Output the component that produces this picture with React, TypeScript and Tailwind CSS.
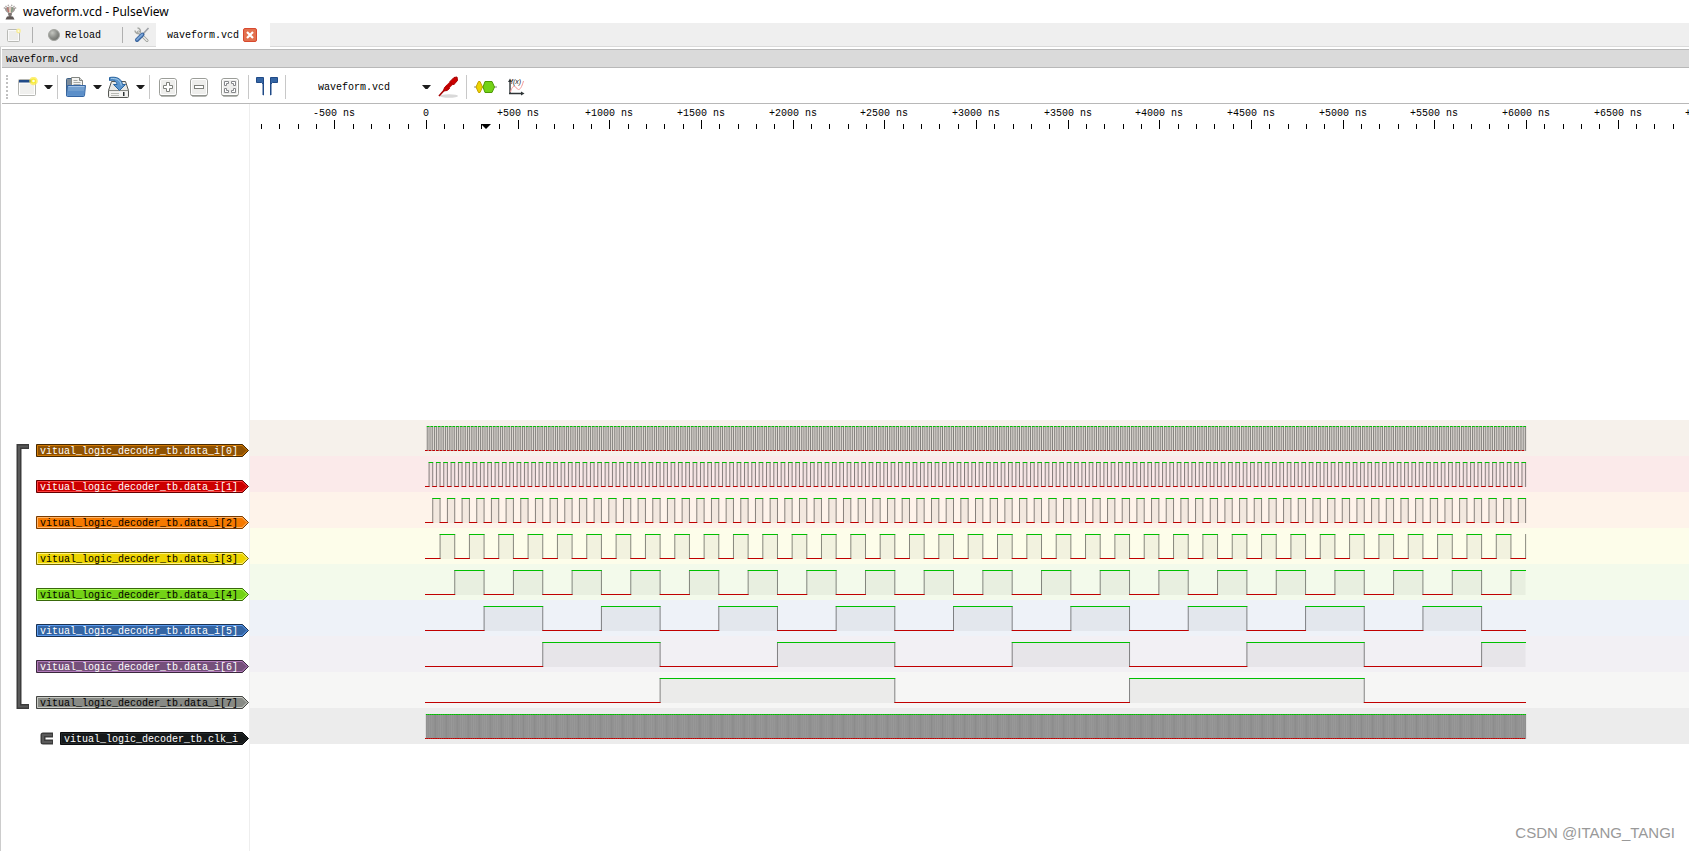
import { useState } from "react";

type Channel = {
  name: string;
  toggle: number; // ns between two edges
  fill: string;
  edge: string;
  light: string;
  text: string;
  row: string;
};

const END = 6000;
const PX_PER_NS = 0.18337;

const channels: Channel[] = [
  { name: "vitual_logic_decoder_tb.data_i[0]", toggle: 10, fill: "#8f5202", edge: "#472901", light: "#d27a06", text: "text-white", row: "bg-[#f6f1eb]" },
  { name: "vitual_logic_decoder_tb.data_i[1]", toggle: 20, fill: "#cc0000", edge: "#660000", light: "#ff4040", text: "text-white", row: "bg-[#fbeaea]" },
  { name: "vitual_logic_decoder_tb.data_i[2]", toggle: 40, fill: "#f57900", edge: "#7a3c00", light: "#ffb469", text: "text-black", row: "bg-[#fef3ea]" },
  { name: "vitual_logic_decoder_tb.data_i[3]", toggle: 80, fill: "#edd400", edge: "#766a00", light: "#fff27a", text: "text-black", row: "bg-[#fdfdea]" },
  { name: "vitual_logic_decoder_tb.data_i[4]", toggle: 160, fill: "#73d216", edge: "#39690b", light: "#b0ff62", text: "text-black", row: "bg-[#f3faeb]" },
  { name: "vitual_logic_decoder_tb.data_i[5]", toggle: 320, fill: "#3465a4", edge: "#1a3252", light: "#5b9bf0", text: "text-white", row: "bg-[#eef2f8]" },
  { name: "vitual_logic_decoder_tb.data_i[6]", toggle: 640, fill: "#75507b", edge: "#3a283d", light: "#b27abb", text: "text-white", row: "bg-[#f2f0f4]" },
  { name: "vitual_logic_decoder_tb.data_i[7]", toggle: 1280, fill: "#888a85", edge: "#444542", light: "#c8cac4", text: "text-black", row: "bg-[#f6f6f5]" },
];

const clock: Channel = {
  name: "vitual_logic_decoder_tb.clk_i",
  toggle: 5,
  fill: "#16191a",
  edge: "#0b0c0d",
  light: "#24292b",
  text: "text-white",
  row: "bg-[#ececec]",
};

const timeToX = (t: number) => 175.4 + t * PX_PER_NS;

const Trace = ({ channel }: { channel: Channel }) => {
  const edges: number[] = [];
  for (let t = channel.toggle; t <= END; t += channel.toggle) edges.push(t);

  let high = "";
  let low = "";
  let area = "";
  for (let i = 0; i * channel.toggle < END; i++) {
    const a = timeToX(i * channel.toggle);
    const b = timeToX(Math.min((i + 1) * channel.toggle, END));
    // the level lines reach over half of the edge at both ends
    const level = `M${(a - 0.4).toFixed(2)} ${i % 2 ? 6.5 : 30.5}H${(b + 0.4).toFixed(2)}`;
    if (i % 2) {
      high += level;
      area += `M${a.toFixed(2)} 6H${b.toFixed(2)}V31H${a.toFixed(2)}Z`;
    } else {
      low += level;
    }
  }

  return (
    <div className={`h-9 ${channel.row}`}>
      <svg className="block h-9 w-full" aria-hidden="true">
        <path d={area} fill="#000" fillOpacity="0.045" />
        <g stroke="#000" strokeOpacity={channel.toggle < 10 ? 0.36 : 0.46}>
          {edges.map((t) => (
            <line key={t} x1={timeToX(t)} x2={timeToX(t)} y1="6" y2="31" />
          ))}
        </g>
        <path d={high} stroke="#00c000" />
        <path d={low} stroke="#c00000" />
      </svg>
    </div>
  );
};

const Ruler = () => {
  const ticks: number[] = [];
  for (let t = -900; t <= 7000; t += 100) ticks.push(t);
  const label = (t: number) => (t === 0 ? "0" : `${t > 0 ? "+" : "-"}${Math.abs(t)} ns`);

  return (
    <svg className="block h-9 w-full font-['Liberation_Mono',monospace] text-[10px]">
      {ticks.map((t) => {
        const x = Math.round(timeToX(t) + 0.5);
        const major = t % 500 === 0;
        return (
          <g key={t}>
            <rect x={x} y={major ? 16 : 20} width="1" height={major ? 9 : 5} />
            {major && (
              <text x={x} y="12" textAnchor="middle">
                {label(t)}
              </text>
            )}
          </g>
        );
      })}
      <path d="M231 20H241L236 25Z" />
    </svg>
  );
};

const Tag = ({ channel, width }: { channel: Channel; width: number }) => (
  <button className={`relative block h-[13px] pl-1 text-left ${channel.text}`} style={{ width }}>
    <svg className="absolute inset-0 h-full w-full" aria-hidden="true">
      <path d={`M.5 .5H${width - 6.5}L${width - 0.5} 6.5L${width - 6.5} 12.5H.5Z`} fill={channel.fill} stroke={channel.edge} />
      <path d={`M1.5 1.5H${width - 6.9}L${width - 1.9} 6.5L${width - 6.9} 11.5H1.5Z`} fill="none" stroke={channel.light} />
    </svg>
    <span className="relative block leading-[15px]">{channel.name}</span>
  </button>
);

const Arrow = () => (
  <svg width="9" height="5" viewBox="0 0 9 5" aria-hidden="true">
    <path d="M0 0H9L5.5 4H3.5Z" fill="#1c1c1c" />
  </svg>
);

const Separator = () => <div className="h-6 w-px bg-[#c8c8c8]" />;

const AppIcon = () => (
  <svg width="14" height="16" viewBox="0 0 14 16" aria-hidden="true">
    <path d="M.8 4.500L2 3.500M2.500 2L3.500 3M5 .8L5.500 2M9 .8L8.500 2M11.500 2L10.500 3M13.200 4.500L12 3.500" stroke="#a9a3a0" strokeWidth="1.300" />
    <path d="M2 4Q7 1 12 4V6Q11 8 9 9V11H5V9Q3 8 2 6Z" fill="#a39c98" />
    <path d="M4.500 3.500L5.500 8" stroke="#c76a62" />
    <path d="M7 3v6" stroke="#f3d9c8" strokeWidth="1.500" />
    <path d="M9.500 3.500L8.500 8" stroke="#79a07c" />
    <path d="M5.500 9h3v4h-3Z" fill="#7d7572" />
    <path d="M4 12.500H10L11.500 15.500H2.500Z" fill="#5d5552" />
  </svg>
);

const SessionIcon = () => (
  <svg width="15" height="15" viewBox="0 0 15 15" aria-hidden="true">
    <rect x=".5" y="1.5" width="12" height="12" rx="1" fill="#ededeb" stroke="#b9bab6" />
    <rect x="1.5" y="2.5" width="10" height="10" fill="none" stroke="#fafafa" />
    <circle cx="11.5" cy="3" r="2.4" fill="#f7ec9a" />
    <circle cx="11.5" cy="3" r="1" fill="#fffde0" />
  </svg>
);

const BallIcon = () => (
  <svg width="12" height="12" viewBox="0 0 12 12" aria-hidden="true">
    <defs>
      <radialGradient id="ball" cx=".35" cy=".3" r=".75">
        <stop offset="0" stopColor="#c4c6c0" />
        <stop offset=".6" stopColor="#8a8c87" />
        <stop offset="1" stopColor="#6d6f6b" />
      </radialGradient>
    </defs>
    <circle cx="6" cy="6" r="5.5" fill="url(#ball)" stroke="#a4a6a1" />
  </svg>
);

const ToolsIcon = () => (
  <svg width="16" height="16" viewBox="0 0 16 16" aria-hidden="true">
    <path d="M4.500 5L13 13.500" stroke="#9b9d99" strokeWidth="3" strokeLinecap="round" />
    <path d="M4.500 5L13 13.500" stroke="#e9eae7" strokeWidth="1.500" strokeLinecap="round" />
    <path d="M1 3.500a3 3 0 0 0 4.500 2.500M3.500 1a3 3 0 0 1 2.500 4.500" stroke="#a5a7a3" strokeWidth="1.500" fill="none" />
    <path d="M14.500 1L8.500 7.500" stroke="#9da1a7" strokeWidth="1.600" />
    <path d="M8.500 7.500L3 13" stroke="#3a659f" strokeWidth="4" strokeLinecap="round" />
    <path d="M8.200 7.500L3 12.700" stroke="#7ba6da" strokeWidth="1.800" strokeLinecap="round" />
  </svg>
);

const CloseIcon = () => (
  <svg width="14" height="14" viewBox="0 0 14 14" aria-hidden="true">
    <rect x=".5" y=".5" width="13" height="13" rx="1.500" fill="#e2714f" stroke="#d8492f" />
    <path d="M4 4l6 6M10 4l-6 6" stroke="#fff" strokeWidth="2.200" />
  </svg>
);

const NewIcon = () => (
  <svg width="20" height="20" viewBox="0 0 20 20" aria-hidden="true">
    <rect x=".5" y="2.500" width="17" height="16" rx="1" fill="#ebebe9" stroke="#b5b6b2" />
    <rect x="1.500" y="6" width="15" height="11.500" fill="#f0f0ee" stroke="#fff" />
    <rect x="1" y="3" width="16" height="2.500" fill="#204a87" />
    <circle cx="15.500" cy="4" r="4.300" fill="#fce94f" opacity=".75" />
    <circle cx="15.500" cy="4" r="2.500" fill="#f8ee2e" />
    <circle cx="15.500" cy="4" r="1.300" fill="#fffde0" />
  </svg>
);

const OpenIcon = () => (
  <svg width="22" height="22" viewBox="0 0 22 22" aria-hidden="true">
    <path d="M1.500 19.500V3.500Q1.500 2.500 2.500 2.500H7.500L9 4.500H17.500V19.500Z" fill="#7d8c9b" stroke="#3b5f86" />
    <path d="M6.500 11V1.500H14.500L17.500 4.500V11Z" fill="#f4f4f2" stroke="#848682" />
    <path d="M14.500 1.500V4.500H17.500" fill="#d3d4d1" stroke="#848682" />
    <path d="M8.500 4.500h4M8.500 6.500h7M8.500 8.500h7" stroke="#a8aaa6" />
    <path d="M2.500 9.500H20.500L19.500 19.500Q19.400 20.500 18.500 20.500H2.500Q1.500 20.500 1.500 19.500Z" fill="#729fcf" stroke="#3465a4" />
    <path d="M3 15H19.400L18.800 19.800H2.500Z" fill="#5c8fc9" />
    <path d="M3.500 10.500H19.300" stroke="#a4c3e6" />
  </svg>
);

const SaveIcon = () => (
  <svg width="23" height="23" viewBox="0 0 23 23" aria-hidden="true">
    <path d="M4.500 5.500H18.500L21.500 14.500V20.500Q21.500 21.500 20.500 21.500H2.500Q1.500 21.500 1.500 20.500V14.500Z" fill="#e8e9e6" stroke="#555753" />
    <path d="M2 14.500H21" stroke="#888a85" />
    <rect x="2.500" y="15.500" width="18" height="5" fill="#f4f4f2" />
    <path d="M4 17.500H12M4 19.500H12" stroke="#b8bab5" />
    <rect x="16" y="16" width="1.500" height="4" fill="#2e3436" />
    <path d="M2.500 1.500C9 .5 14.500 2 15.500 8.500H18.500L12.500 14.500L6.500 8.500H10C9.500 5 6.500 3.500 2.500 4.500Z" fill="#5b95cd" stroke="#27639f" />
    <path d="M4 2.600C9 2 13.500 3.500 14.300 9.500" stroke="#a5cbe8" fill="none" />
  </svg>
);

const ZoomIcon = ({ kind }: { kind: "in" | "out" | "fit" }) => (
  <svg width="19" height="19" viewBox="0 0 19 19" aria-hidden="true">
    <rect x=".5" y=".5" width="17" height="17.500" rx="2.500" fill="#eeeeec" stroke="#9b9d98" />
    <rect x="1.500" y="1.500" width="15" height="15" rx="1.500" fill="none" stroke="#fff" />
    <path d="M2 17.800H16.500" stroke="#7e807b" />
    {kind === "in" && <path d="M7.500 4.500H10.500V7.500H13.500V10.500H10.500V13.500H7.500V10.500H4.500V7.500H7.500Z" fill="#fff" stroke="#7e807b" />}
    {kind === "out" && <rect x="4.500" y="7.500" width="9" height="3" fill="#fff" stroke="#7e807b" />}
    {kind === "fit" && (
      <g fill="#fff" stroke="#85878a">
        <path d="M3.500 3.500H7.500V5.500H5.500V7.500H3.500Z" />
        <path d="M10.500 3.500H14.500V7.500H12.500V5.500H10.500Z" />
        <path d="M3.500 10.500H5.500V12.500H7.500V14.500H3.500Z" />
        <path d="M12.500 10.500H14.500V14.500H10.500V12.500H12.500Z" />
      </g>
    )}
  </svg>
);

const CursorsIcon = () => (
  <svg width="22" height="20" viewBox="0 0 22 20" aria-hidden="true">
    <path d="M.5 .5H7.500V18H7V7L5.500 5.500H.5Z" fill="#3465a4" stroke="#204a87" />
    <path d="M21.500 .5H14.500V18H15V7L16.500 5.500H21.500Z" fill="#3465a4" stroke="#204a87" />
  </svg>
);

const ProbeIcon = () => (
  <svg width="22" height="23" viewBox="0 0 22 23" aria-hidden="true">
    <ellipse cx="11" cy="20" rx="9" ry="1.800" fill="#d9d9d9" />
    <path d="M1 20L9 11" stroke="#a40000" strokeWidth="1.600" />
    <path d="M6.500 11.500L9 9.500L11.500 12.500L9 14.500L5.500 15Z" fill="#cc0000" stroke="#a40000" />
    <path d="M8.500 12L14 6.500" stroke="#c00000" strokeWidth="4" />
    <path d="M12 5.500L16 1.500L19 1L19.500 4.500L15.500 9Z" fill="#cc0000" stroke="#a40000" />
  </svg>
);

const DecodeIcon = () => (
  <svg width="23" height="14" viewBox="0 0 23 14" aria-hidden="true">
    <path d="M0 7H23" stroke="#888a85" />
    <path d="M2 7L4.500 1.500H6L8.500 7L6 12.500H4.500Z" fill="#edd400" stroke="#c4a000" />
    <path d="M9 7L11 1.500H18L20.500 7L18 12.500H11Z" fill="#73d216" stroke="#4e9a06" />
  </svg>
);

const MathIcon = () => (
  <svg width="18" height="18" viewBox="0 0 18 18" aria-hidden="true">
    <path d="M3 16V2M2 15.500H15" stroke="#2e3436" strokeWidth="1.400" fill="none" />
    <path d="M1 4L3 .5L5 4ZM14 13.500L17.500 15.500L14 17.500Z" fill="#2e3436" />
    <path d="M3.500 14C5 8 7.500 7 9.500 10S14 12 16.500 3" stroke="#f39a9a" fill="none" />
    <text x="4" y="6" className="font-['Liberation_Sans',sans-serif] text-[7px] italic" fill="#222">
      f(x)
    </text>
  </svg>
);

const App = () => {
  const [device, setDevice] = useState("waveform.vcd");

  return (
    <div className="flex min-h-screen flex-col overflow-hidden bg-white font-['Liberation_Mono',monospace] text-[10px] text-black">
      <header className="flex h-[23px] items-center gap-1 pl-[3px]">
        <AppIcon />
        <h1 className="pl-[2px] font-['Noto_Sans',sans-serif] text-[12px]">waveform.vcd - PulseView</h1>
      </header>

      <nav className="flex h-6 items-center border-b border-[#d9d9d9] bg-[#efefef] pt-px">
        <button className="ml-[7px]" aria-label="New session">
          <SessionIcon />
        </button>
        <div className="ml-[10px] h-4 w-px bg-[#b0b0b0]" />
        <button className="ml-[15px] flex items-center gap-[5px]">
          <BallIcon />
          Reload
        </button>
        <div className="ml-[21px] h-4 w-px bg-[#b0b0b0]" />
        <button className="ml-[11px]" aria-label="Settings">
          <ToolsIcon />
        </button>
        <div className="-my-px ml-[6px] flex h-6 items-center gap-1 bg-white pr-[13px] pl-[11px]">
          <span>waveform.vcd</span>
          <button aria-label="Close">
            <CloseIcon />
          </button>
        </div>
      </nav>

      <main className="flex flex-1 flex-col border-l border-[#cccccc] pt-[2px]">
        <h2 className="ml-px flex h-[19px] items-center border-y border-[#b8b8b8] bg-[#dadada] pt-[2px] pl-1">waveform.vcd</h2>

        <div className="ml-px flex h-9 items-center border-b border-[#b8b8b8] pt-[3px] pl-[4px]">
          <div className="h-6 border-l-2 border-dotted border-[#c0c0c0]" />
          <button className="ml-[10px] flex items-center gap-[6px]" aria-label="New view">
            <NewIcon />
            <Arrow />
          </button>
          <div className="ml-1">
            <Separator />
          </div>
          <button className="ml-[7px] flex items-center gap-[6px]" aria-label="Open">
            <OpenIcon />
            <Arrow />
          </button>
          <button className="ml-[5px] flex items-center gap-[6px]" aria-label="Save">
            <SaveIcon />
            <Arrow />
          </button>
          <div className="ml-1">
            <Separator />
          </div>
          <div className="ml-[9px] flex gap-3">
            <button aria-label="Zoom in">
              <ZoomIcon kind="in" />
            </button>
            <button aria-label="Zoom out">
              <ZoomIcon kind="out" />
            </button>
            <button aria-label="Zoom to fit">
              <ZoomIcon kind="fit" />
            </button>
          </div>
          <div className="ml-2">
            <Separator />
          </div>
          <button className="ml-[7px]" aria-label="Show cursors">
            <CursorsIcon />
          </button>
          <div className="ml-[7px]">
            <Separator />
          </div>
          <div className="relative ml-8 flex items-center">
            <select
              className="w-[113px] appearance-none bg-transparent outline-none"
              aria-label="Device"
              value={device}
              onChange={(e) => setDevice(e.target.value)}
            >
              <option>waveform.vcd</option>
            </select>
            <span className="pointer-events-none absolute right-0">
              <Arrow />
            </span>
          </div>
          <button className="ml-[7px]" aria-label="Channels">
            <ProbeIcon />
          </button>
          <div className="ml-[6px]">
            <Separator />
          </div>
          <button className="ml-[7px]" aria-label="Add protocol decoder">
            <DecodeIcon />
          </button>
          <button className="ml-[10px]" aria-label="Add math signal">
            <MathIcon />
          </button>
        </div>

        <div className="flex flex-1">
          <aside className="flex w-[249px] shrink-0 flex-col items-end gap-[23px] border-r border-[#eeeeee] pt-[340px]">
            <div className="flex gap-[7px]">
              <svg className="w-[13px] self-stretch" viewBox="0 0 13 265" fill="none" aria-hidden="true">
                <path d="M13 2.500H3V262.500H13" stroke="#3c3c3c" strokeWidth="5" />
                <path d="M12 2.500H3V262.500H12" stroke="#5a5a5a" strokeWidth="2" />
              </svg>
              <div className="flex flex-col gap-[23px]">
                {channels.map((channel) => (
                  <Tag key={channel.name} channel={channel} width={213} />
                ))}
              </div>
            </div>
            <div className="flex gap-[7px]">
              <svg width="13" height="13" viewBox="0 0 13 13" fill="none" aria-hidden="true">
                <path d="M13 3H3V10H13" stroke="#3c3c3c" strokeWidth="5" strokeLinejoin="round" />
                <path d="M12 3H3V10H12" stroke="#5a5a5a" strokeWidth="2" />
              </svg>
              <Tag channel={clock} width={189} />
            </div>
          </aside>

          <section className="relative min-w-0 flex-1">
            <Ruler />
            <div className="mt-[280px]">
              {channels.map((channel) => (
                <Trace key={channel.name} channel={channel} />
              ))}
              <Trace channel={clock} />
            </div>
            <p className="absolute right-[14px] bottom-2 font-['Liberation_Sans',sans-serif] text-[15px] leading-5 text-[#999999]">
              CSDN @ITANG_TANGI
            </p>
          </section>
        </div>
      </main>
    </div>
  );
};

export default App;
